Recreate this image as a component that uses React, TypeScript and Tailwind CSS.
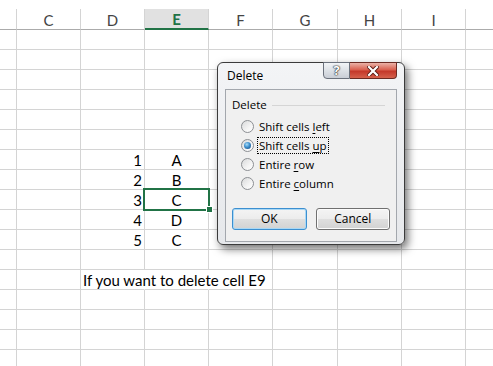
import React from 'react';

const COLS = [
  { key: 'B', w: 'w-[17px]' },
  { key: 'C', w: 'w-[64px]' },
  { key: 'D', w: 'w-[64px]' },
  { key: 'E', w: 'w-[64px]' },
  { key: 'F', w: 'w-[64px]' },
  { key: 'G', w: 'w-[65px]' },
  { key: 'H', w: 'w-[64px]' },
  { key: 'I', w: 'w-[64px]' },
  { key: 'J', w: 'w-[64px]' },
];

const DATA: Record<number, { num?: string; letter?: string; note?: string }> = {
  6: { num: '1', letter: 'A' },
  7: { num: '2', letter: 'B' },
  8: { num: '3', letter: 'C' },
  9: { num: '4', letter: 'D' },
  10: { num: '5', letter: 'C' },
  12: { note: 'If you want to delete cell E9' },
};

const ROWS = Array.from({ length: 17 }, (_, i) => i);

function Radio({ checked }: { checked?: boolean }) {
  return (
    <span className="w-[13px] h-[13px] shrink-0 rounded-full border border-[#8c8f93] bg-[linear-gradient(135deg,#d9dadb,#f4f4f4_60%,#ffffff)] flex items-center justify-center">
      {checked && (
        <span className="w-[7px] h-[7px] rounded-full bg-[radial-gradient(circle_at_40%_35%,#a8dcf7_0%,#3d8fcd_45%,#123f74_100%)]" />
      )}
    </span>
  );
}

function Option({ before, key1, after, checked, focus }: { before: string; key1: string; after: string; checked?: boolean; focus?: boolean }) {
  return (
    <div className="h-[19px] flex items-center pl-[9px]">
      <Radio checked={checked} />
      <span
        className={[
          'ml-[3px] px-px leading-[15px] border',
          focus ? 'border-dotted border-black' : 'border-transparent',
        ].join(' ')}
      >
        {before}
        <span className="underline underline-offset-2">{key1}</span>
        {after}
      </span>
    </div>
  );
}

function DeleteDialog() {
  return (
    <div className="absolute left-[217px] top-[62px] w-[188px] h-[183px] rounded-[6px] border border-[#3b3b3b] bg-[linear-gradient(180deg,#f3f4f6,#e6e8eb)] shadow-[3px_4px_8px_rgba(0,0,0,0.55)] pt-[26px] px-[7px] pb-[2px] font-['Open_Sans',sans-serif] text-[11.5px] text-black">
      <div className="absolute left-[9px] top-[5px] text-[12px] leading-[16px]">Delete</div>

      <div className="absolute top-[-1px] right-[7px] flex h-[17px]">
        <div className="w-[27px] h-full border border-[#6b717c] rounded-bl-[4px] bg-[linear-gradient(180deg,#f2f4f7,#dde1e6_50%,#c9ced6)] flex items-center justify-center text-white font-bold text-[13px] leading-none [text-shadow:0_0_1px_#222,0_0_1px_#222,0_0_2px_#444]">
          ?
        </div>
        <div className="w-[47px] h-full border border-l-0 border-[#6b2a22] rounded-br-[4px] bg-[linear-gradient(180deg,#eab2a7,#d9604f_45%,#c4382a_55%,#d5614c)] flex items-center justify-center">
          <svg width="12" height="10" viewBox="0 0 12 10">
            <path d="M2 1 L10 9 M10 1 L2 9" stroke="#5a1a12" strokeWidth="4" strokeLinecap="square" />
            <path d="M2 1 L10 9 M10 1 L2 9" stroke="#ffffff" strokeWidth="2.2" strokeLinecap="square" />
          </svg>
        </div>
      </div>

      <div className="h-full border border-[#a3a7ad] bg-[#f0f0f0] pt-[7px] px-[6px]">
        <div className="flex items-center h-[16px]">
          <span className="leading-[16px]">Delete</span>
          <span className="flex-1 h-px bg-[#d5d5d5] ml-[5px] mr-[5px]" />
        </div>
        <div className="mt-[4px]">
          <Option before="Shift cells " key1="l" after="eft" />
          <Option before="Shift cells " key1="u" after="p" checked focus />
          <Option before="Entire " key1="r" after="ow" />
          <Option before="Entire " key1="c" after="olumn" />
        </div>
        <div className="flex gap-[9px] mt-[15px]">
          <button className="w-[75px] h-[22px] rounded-[3px] border border-[#3c8fd0] bg-[linear-gradient(180deg,#f4f4f4,#ececec_50%,#dfdfdf_51%,#d2d2d2)] shadow-[inset_0_0_0_1px_#a9d8f5] text-[12px] text-black">
            OK
          </button>
          <button className="w-[75px] h-[22px] rounded-[3px] border border-[#707070] bg-[linear-gradient(180deg,#f4f4f4,#ececec_50%,#dfdfdf_51%,#d2d2d2)] shadow-[inset_0_0_0_1px_#fcfcfc] text-[12px] text-black">
            Cancel
          </button>
        </div>
      </div>
    </div>
  );
}

export default function App() {
  return (
    <div className="relative w-[493px] h-[366px] overflow-hidden bg-white font-['Lato',sans-serif] text-[15px] text-black">
      <div className="h-[9px]" />
      {/* column headers */}
      <div className="flex h-[21px]">
        {COLS.map(c => (
          <div
            key={c.key}
            className={[
              c.w,
              'shrink-0 h-full border-r border-[#d4d4d4] flex items-center justify-center pt-[2px]',
              c.key === 'E'
                ? 'bg-[#e1e1e1] border-b-2 border-b-[#217346] text-[#217346] font-bold'
                : 'border-b border-b-[#ababab] text-[#444444]',
            ].join(' ')}
          >
            {c.key === 'B' || c.key === 'J' ? '' : c.key}
          </div>
        ))}
      </div>
      {/* rows */}
      {ROWS.map(r => {
        const d = DATA[r];
        return (
          <div key={r} className="flex h-[20px]">
            {COLS.map(c => {
              const overflowRow = !!d?.note;
              const hideRight = overflowRow && (c.key === 'D' || c.key === 'E');
              return (
                <div
                  key={c.key}
                  className={[
                    c.w,
                    'shrink-0 h-full border-b border-r border-[#d4d4d4] relative flex items-center leading-none pt-[2px]',
                    hideRight ? 'border-r-transparent' : '',
                  ].join(' ')}
                >
                  {c.key === 'D' && d?.num && <span className="w-full text-right pr-[2px]">{d.num}</span>}
                  {c.key === 'E' && d?.letter && <span className="w-full text-center">{d.letter}</span>}
                  {c.key === 'D' && d?.note && <span className="pl-[2px] whitespace-nowrap">{d.note}</span>}
                  {c.key === 'E' && r === 8 && (
                    <div className="absolute left-[-2px] top-[-2px] w-[67px] h-[23px] border-2 border-[#217346] z-10">
                      <div className="absolute left-[62px] top-[17px] w-[5px] h-[5px] bg-[#217346] outline outline-1 outline-white" />
                    </div>
                  )}
                </div>
              );
            })}
          </div>
        );
      })}
      <DeleteDialog />
    </div>
  );
}
